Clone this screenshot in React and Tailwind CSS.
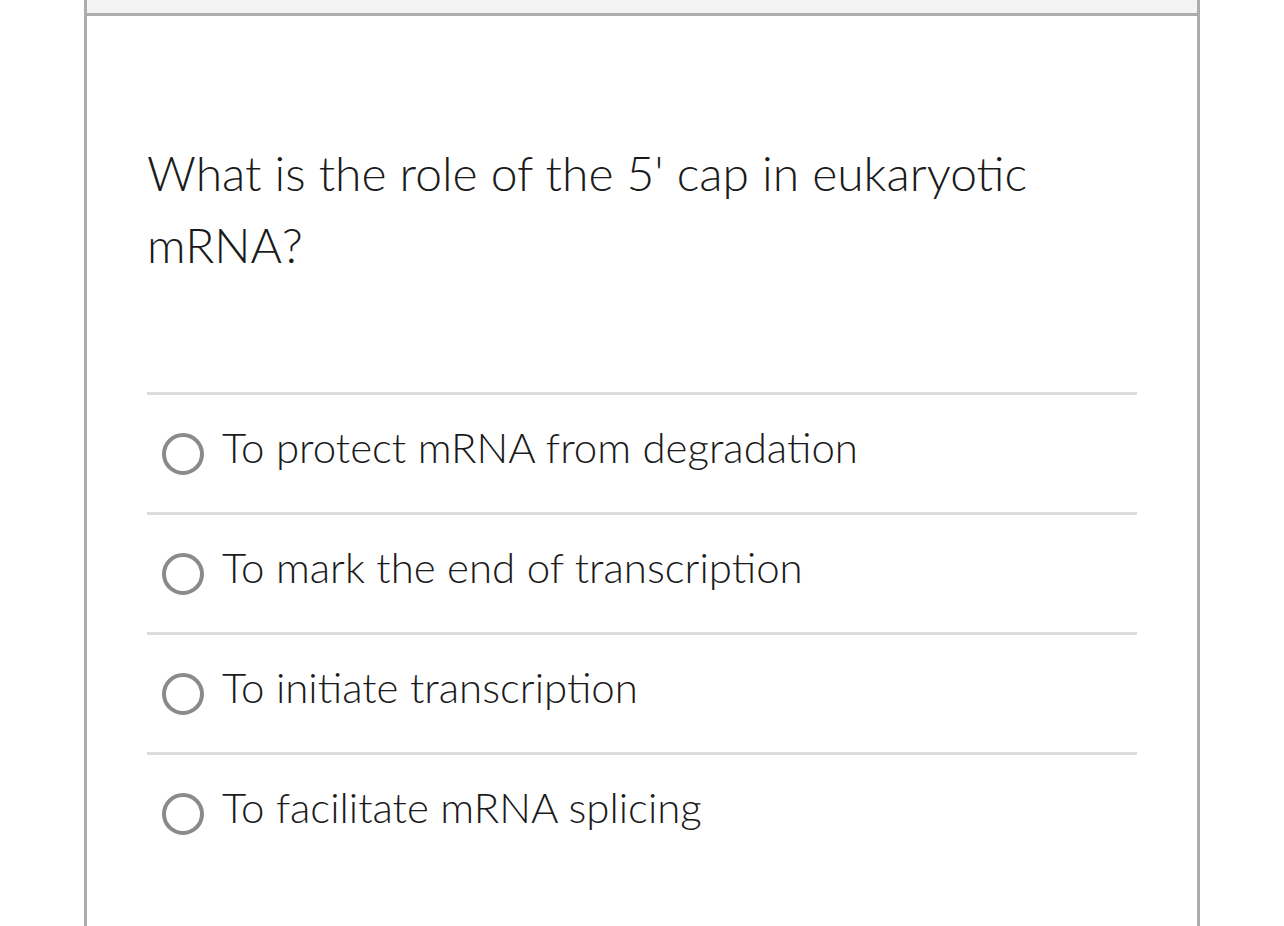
export default function App() {
  const options = [
    "To protect mRNA from degradation",
    "To mark the end of transcription",
    "To initiate transcription",
    "To facilitate mRNA splicing",
  ];

  return (
    <div className="h-[926px] overflow-hidden bg-white" style={{ fontFamily: "'Lato Light', Lato, 'Noto Sans', sans-serif" }}>
      <div className="ml-[84px] w-[1116px] h-[1000px] border-x-[3px] border-[#acacac]">
        <div className="h-[16px] bg-[#f3f3f3] border-b-[3px] border-[#acacac]" />
        <div className="px-[60px] pt-[121px]">
          <h1 className="text-[48px] leading-[72px] font-light text-[#1a1a1a] pr-[100px]">
            What is the role of the 5' cap in eukaryotic mRNA?
          </h1>
          <div className="mt-[111px]">
            {options.map((opt, i) => (
              <label key={i} className="flex items-start h-[120px] border-t-[3px] border-[#dcdcdc] pt-[31px] cursor-pointer">
                <span className="ml-[15px] mt-[7px] w-[42px] h-[42px] rounded-full border-[4px] border-[#8a8a8a] shrink-0" />
                <span className="ml-[18px] text-[42px] leading-[42px] font-light text-[#1a1a1a]">{opt}</span>
              </label>
            ))}
          </div>
        </div>
      </div>
    </div>
  );
}
